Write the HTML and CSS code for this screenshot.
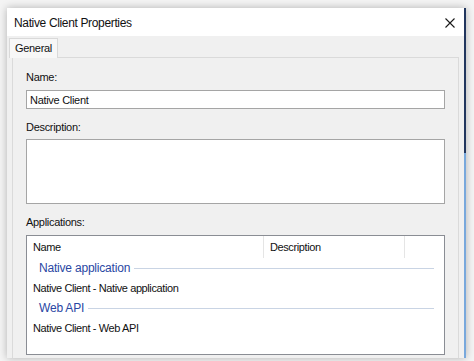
FILE: index.html
```html
<!DOCTYPE html>
<html lang="en">
<head>
    <meta charset="UTF-8">
    <title>Native Client Properties</title>
    <link rel="stylesheet" href="styles.css">
</head>
<body>
    <div class="screen">
        <div class="window">
            <div class="titlebar">
                <span class="title">Native Client Properties</span>
                <svg class="close" width="10" height="10" viewBox="0 0 10 10">
                    <path d="M0.5 0.5 L9.5 9.5 M9.5 0.5 L0.5 9.5" stroke="#1a1a1a" stroke-width="1.1" fill="none"/>
                </svg>
            </div>
            <div class="tabs">
                <div class="tab">General</div>
            </div>
            <div class="panel">
                <div class="label">Name:</div>
                <input class="textbox" type="text" value="Native Client" readonly>
                <div class="label gap">Description:</div>
                <textarea class="textarea" readonly></textarea>
                <div class="label gap">Applications:</div>
                <div class="listbox">
                    <div class="list-header">
                        <div class="col col-name">Name</div>
                        <div class="col col-desc">Description</div>
                        <div class="col col-rest"></div>
                    </div>
                    <div class="group"><span>Native application</span><i></i></div>
                    <div class="item">Native Client - Native application</div>
                    <div class="group"><span>Web API</span><i></i></div>
                    <div class="item">Native Client - Web API</div>
                </div>
            </div>
        </div>
    </div>
</body>
</html>
```

FILE: styles.css
```css
body {
    margin: 0;
    background: #f4f4f4;
    font-family: "Liberation Sans", Arial, sans-serif;
    color: #111;
}
.screen {
    width: 474px;
    height: 361px;
    padding: 8px 0 0 7px;
    box-sizing: border-box;
    overflow: hidden;
}
.window {
    width: 459px;
    height: 350px;
    box-sizing: border-box;
    background: #f0f0f0;
    border-right: 2px solid #6f9fd6;
    border-image: linear-gradient(#22365e 0, #22365e 145px, #78a8dc 145px, #78a8dc 100%) 1;
    box-shadow: 0 0 8px rgba(0, 0, 0, 0.28);
    overflow: hidden;
}
.titlebar {
    height: 28px;
    background: #fff;
    display: flex;
    align-items: center;
    justify-content: space-between;
    padding: 0 9px 0 7px;
}
.title {
    font-size: 12px;
    letter-spacing: -0.35px;
    padding-top: 1px;
}
.close {
    display: block;
    margin-top: 1px;
}
.tabs {
    display: flex;
    padding: 2px 0 0 2px;
}
.tab {
    width: 49px;
    height: 20px;
    box-sizing: border-box;
    border: 1px solid #d9d9d9;
    border-bottom: none;
    background: #f7f7f7;
    font-size: 11px;
    letter-spacing: -0.3px;
    line-height: 19px;
    text-align: center;
    position: relative;
    z-index: 1;
    margin-bottom: -1px;
}
.panel {
    margin-left: 5px;
    width: 447px;
    height: 320px;
    box-sizing: border-box;
    border: 1px solid #dadada;
    background: #f0f0f0;
    padding: 12px 13px 0 13px;
}
.label {
    font-size: 11px;
    letter-spacing: -0.3px;
    line-height: 15px;
}
.label.gap {
    margin-top: 11px;
}
.textbox {
    display: block;
    width: 100%;
    height: 19px;
    box-sizing: border-box;
    margin: 5px 0 0;
    padding: 0 3px;
    border: 1px solid #a5a5a5;
    background: #fff;
    font-family: "Liberation Sans", Arial, sans-serif;
    font-size: 11px;
    letter-spacing: -0.3px;
    color: #111;
    outline: none;
}
.textarea {
    display: block;
    width: 100%;
    height: 65px;
    box-sizing: border-box;
    margin: 4px 0 0;
    border: 1px solid #a5a5a5;
    background: #fff;
    resize: none;
    outline: none;
}
.listbox {
    margin-top: 5px;
    height: 120px;
    box-sizing: border-box;
    border: 1px solid #8a8d94;
    background: #fff;
    font-size: 11px;
    letter-spacing: -0.4px;
}
.list-header {
    display: flex;
    height: 22px;
}
.col {
    box-sizing: border-box;
    line-height: 22px;
    padding-left: 6px;
}
.col-name {
    width: 237px;
    border-right: 1px solid #e5e5e5;
}
.col-desc {
    width: 141px;
    border-right: 1px solid #e5e5e5;
}
.col-rest {
    flex: 1;
}
.group {
    display: flex;
    align-items: center;
    height: 20px;
    padding: 0 10px 0 12px;
    color: #2a47a3;
    font-size: 12px;
    letter-spacing: -0.2px;
}
.group i {
    flex: 1;
    height: 1px;
    margin-left: 4px;
    background: #c9d4e4;
}
.item {
    height: 20px;
    line-height: 20px;
    padding-left: 6px;
}
```
